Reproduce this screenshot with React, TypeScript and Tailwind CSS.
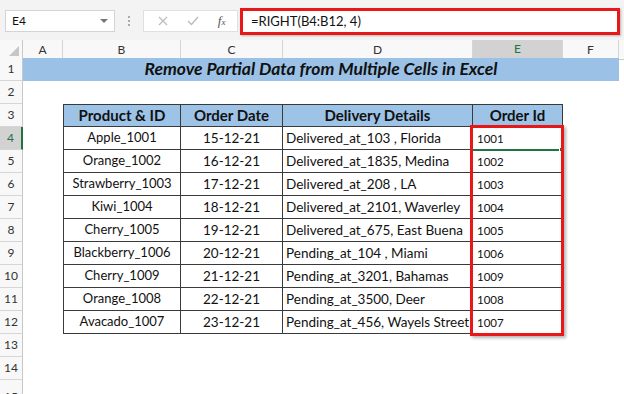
import { Fragment } from "react"

const cols = ["A", "B", "C", "D", "E", "F"]

const rows = [
  ["Apple_1001", "15-12-21", "Delivered_at_103 , Florida", "1001"],
  ["Orange_1002", "16-12-21", "Delivered_at_1835, Medina", "1002"],
  ["Strawberry_1003", "17-12-21", "Delivered_at_208 , LA", "1003"],
  ["Kiwi_1004", "18-12-21", "Delivered_at_2101, Waverley", "1004"],
  ["Cherry_1005", "19-12-21", "Delivered_at_675, East Buena", "1005"],
  ["Blackberry_1006", "20-12-21", "Pending_at_104 , Miami", "1006"],
  ["Cherry_1009", "21-12-21", "Pending_at_3201, Bahamas", "1009"],
  ["Orange_1008", "22-12-21", "Pending_at_3500, Deer", "1008"],
  ["Avacado_1007", "23-12-21", "Pending_at_456, Wayels Street", "1007"],
]

const gridCols = "grid grid-cols-[23px_40px_118px_102px_190px_90px_56px_1fr]"

function RowHead({ n, active }: { n: number; active?: boolean }) {
  return (
    <div
      className={
        "h-[23px] flex items-center justify-center text-[12px] border-b border-[#d6d6d6] " +
        (active
          ? "bg-[#d2d2d2] text-[#217346] border-r-2 border-r-[#217346]"
          : "bg-[#f8f8f8] text-[#333] border-r border-r-[#c8c8c8]")
      }
    >
      {n}
    </div>
  )
}

export default function App() {
  return (
    <div className="w-[624px] h-[394px] overflow-hidden bg-white font-['Lato',sans-serif] text-[#111]">
      {/* formula bar */}
      <div className="h-[40px] bg-[#f3f3f3] flex items-start pt-[8px] pl-[5px] pr-[4px]">
        <div className="mt-[2px] w-[110px] h-[22px] bg-white border border-[#d4d4d4] flex items-center justify-between pl-[6px] pr-[6px] text-[12px]">
          <span>E4</span>
          <span className="w-0 h-0 border-l-[4px] border-r-[4px] border-t-[4px] border-l-transparent border-r-transparent border-t-[#777]" />
        </div>
        <div className="mt-[2px] w-[28px] h-[22px] flex flex-col items-center justify-center gap-[2px]">
          <span className="w-[2px] h-[2px] bg-[#aaa]" />
          <span className="w-[2px] h-[2px] bg-[#aaa]" />
          <span className="w-[2px] h-[2px] bg-[#aaa]" />
        </div>
        <div className="mt-[2px] w-[95px] h-[22px] bg-white border border-[#e0e0e0] flex items-center justify-around pl-[4px] pr-[2px]">
          <svg width="10" height="10" viewBox="0 0 10 10" stroke="#bbb" strokeWidth="1.2">
            <path d="M1 1 L9 9 M9 1 L1 9" />
          </svg>
          <svg width="12" height="10" viewBox="0 0 12 10" fill="none" stroke="#bbb" strokeWidth="1.4">
            <path d="M1 5 L4.5 8.5 L11 1" />
          </svg>
          <span className="text-[#555] italic font-['Liberation_Serif',serif] text-[13px]">
            f<span className="text-[9px]">x</span>
          </span>
        </div>
        <div className="ml-[2px] flex-1 h-[27px] bg-white border-[3px] border-[#e81818] flex items-center pl-[8px] text-[13px] shadow-[1px_1px_2px_rgba(0,0,0,0.25)]">
          =RIGHT(B4:B12, 4)
        </div>
      </div>

      {/* column headers */}
      <div className={gridCols + " h-[18px] bg-[#f8f8f8] text-[12px] text-[#333]"}>
        <div className="border-r border-b border-[#c8c8c8] flex items-end justify-end pr-[3px] pb-[3px]">
          <svg width="10" height="10" viewBox="0 0 10 10">
            <path d="M10 0 L10 10 L0 10 Z" fill="#c6c6c6" />
          </svg>
        </div>
        {cols.map((c) => (
          <div
            key={c}
            className={
              "flex items-center justify-center border-r border-[#d6d6d6] " +
              (c === "E"
                ? "bg-[#d2d2d2] text-[#217346] border-b-2 border-b-[#217346]"
                : "border-b border-b-[#c8c8c8]")
            }
          >
            {c}
          </div>
        ))}
        <div className="border-b border-[#c8c8c8]" />
      </div>

      {/* sheet body */}
      <div className="relative">
        {/* row 1 */}
        <div className={gridCols}>
          <RowHead n={1} />
          <div className="col-span-6 h-[23px] bg-[#9bc2e6] flex items-center justify-center font-bold italic text-[17.5px]">
            Remove Partial Data from Multiple Cells in Excel
          </div>
          <div />
        </div>
        {/* row 2 */}
        <div className={gridCols}>
          <RowHead n={2} />
        </div>
        {/* row 3 header */}
        <div className={gridCols}>
          <RowHead n={3} />
          <div />
          {["Product & ID", "Order Date", "Delivery Details", "Order Id"].map((h, i) => (
            <div
              key={h}
              className={
                "h-[23px] bg-[#9dc3e6] flex items-center justify-center font-bold text-[15px] border-t border-r border-b border-[#3a3a3a] " +
                (i === 0 ? "border-l" : "")
              }
            >
              {h}
            </div>
          ))}
        </div>
        {rows.map((r, i) => (
          <div key={i} className={gridCols}>
            <RowHead n={i + 4} active={i === 0} />
            <div />
            <div className="h-[23px] flex items-center justify-center text-[13px] border-l border-r border-b border-[#3a3a3a]">
              {r[0]}
            </div>
            <div className="h-[23px] flex items-center justify-center text-[13.5px] border-r border-b border-[#3a3a3a]">
              {r[1]}
            </div>
            <div className="h-[23px] flex items-center pl-[3px] text-[13.5px] whitespace-nowrap border-r border-b border-[#3a3a3a]">
              {r[2]}
            </div>
            <div className="h-[23px] flex items-end pb-[2px] pl-[4px] text-[11.5px] border-r border-b border-[#3a3a3a]">
              {r[3]}
            </div>
          </div>
        ))}
        {[13, 14].map((n) => (
          <div key={n} className={gridCols}>
            <RowHead n={n} />
          </div>
        ))}
        <div className={gridCols}>
          <div className="h-[23px] bg-[#f8f8f8] border-r border-[#c8c8c8] flex items-start justify-center text-[12px] text-[#333] pt-[8px]">
            15
          </div>
        </div>

        {/* active cell underline on E4 */}
        <div className="absolute left-[473px] top-[91px] w-[89px] h-[2px] bg-[#217346]" />
        <div className="absolute left-[559px] top-[89px] w-[5px] h-[5px] bg-[#217346] border border-white" />
        {/* red highlight around E4:E12 */}
        <div className="absolute left-[470px] top-[67px] w-[94px] h-[211px] border-[3px] border-[#e81818] shadow-[2px_2px_3px_rgba(0,0,0,0.3)]" />
      </div>
    </div>
  )
}
